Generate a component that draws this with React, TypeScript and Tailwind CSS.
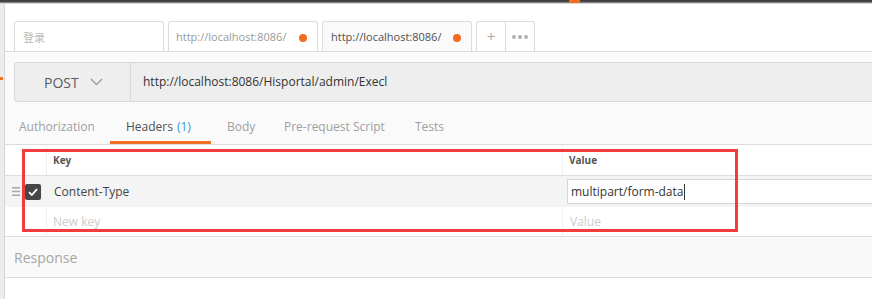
export default function App() {
  return (
    <div className="relative w-[872px] h-[299px] overflow-hidden bg-white font-['Open_Sans',sans-serif]">
      {/* top dark line */}
      <div className="relative h-[4px] bg-[linear-gradient(#3c3c3c_0px,#4a4a4a_2px,#bdbdbd_3px,#f2f2f2_4px)]">
        <div className="absolute left-[569px] top-0 h-[3px] w-[11px] bg-[#f26b21]" />
      </div>
      <div className="flex h-[295px]">
        {/* left strip */}
        <div className="relative w-[5px] shrink-0 bg-[#ececec] border-r border-[#d6d6d6]">
          <div className="absolute left-0 top-[73px] h-[3px] w-[3px] bg-[#f47023]" />
        </div>
        <div className="flex min-w-0 flex-1 flex-col">
          {/* tab bar */}
          <div className="flex h-[48px] shrink-0 items-end gap-[4px] border-b border-[#dcdcdc] bg-white pl-[9px]">
            <div className="flex h-[30px] w-[150px] items-center rounded-t-[3px] border border-b-0 border-[#dcdcdc] bg-white pl-[8px] pt-[2px]">
              <span className="text-[11px] text-[#bbbbbb] font-['Noto_Sans_CJK_SC',sans-serif]">登录</span>
            </div>
            <div className="flex h-[30px] w-[150px] items-center justify-between rounded-t-[3px] border border-b-0 border-[#dcdcdc] bg-white pl-[7px] pr-[10px] pt-[2px]">
              <span className="text-[11px] text-[#9a9a9a]">http://localhost:8086/</span>
              <span className="h-[8px] w-[8px] rounded-full bg-[#f26b21]" />
            </div>
            <div className="flex h-[30px] w-[150px] items-center justify-between rounded-t-[3px] border border-b-0 border-[#dcdcdc] bg-[#fafafa] pl-[8px] pr-[10px] pt-[2px]">
              <span className="text-[11px] text-[#505050]">http://localhost:8086/</span>
              <span className="h-[8px] w-[8px] rounded-full bg-[#f26b21]" />
            </div>
            <div className="flex h-[30px] rounded-t-[3px] border border-b-0 border-[#dcdcdc] bg-white">
              <div className="flex w-[29px] items-center justify-center border-r border-[#dcdcdc] text-[15px] leading-none text-[#aaaaaa]">+</div>
              <div className="flex w-[28px] items-center justify-center gap-[2px]">
                <span className="h-[4px] w-[4px] rounded-full bg-[#b0b0b0]" />
                <span className="h-[4px] w-[4px] rounded-full bg-[#b0b0b0]" />
                <span className="h-[4px] w-[4px] rounded-full bg-[#b0b0b0]" />
              </div>
            </div>
          </div>

          {/* request area */}
          <div className="flex flex-col bg-[#fafafa] pl-[9px]">
            <div className="mt-[10px] mr-[-10px] flex h-[40px] rounded-[3px] border border-[#d8d8d8] bg-[#eeeeee]">
              <div className="flex w-[116px] items-center border-r border-[#d8d8d8] pl-[29px]">
                <span className="text-[14px] font-medium text-[#5c5c5c]">POST</span>
                <svg className="ml-[11px]" width="13" height="8" viewBox="0 0 13 8">
                  <polyline points="1,1 6.5,6.5 12,1" fill="none" stroke="#a0a0a0" strokeWidth="1.5" />
                </svg>
              </div>
              <div className="flex items-center pl-[12px] text-[12px] text-[#333333]">
                http://localhost:8086/Hisportal/admin/Execl
              </div>
            </div>
          </div>

          {/* sub tabs */}
          <div className="flex h-[43px] shrink-0 border-b border-[#dcdcdc] bg-[#fafafa] text-[12px] text-[#a0a0a0]">
            <div className="flex w-[105px] items-center border-b-[3px] border-transparent pl-[14px] pt-[10px]">Authorization</div>
            <div className="flex w-[101px] items-center border-b-[3px] border-[#f07025] pl-[16px] pt-[10px] text-[#505050]">
              Headers <span className="ml-[4px] text-[#3d97de]">(1)</span>
            </div>
            <div className="flex w-[57px] items-center border-b-[3px] border-transparent pl-[16px] pt-[10px]">Body</div>
            <div className="flex w-[131px] items-center border-b-[3px] border-transparent pl-[16px] pt-[10px]">Pre-request Script</div>
            <div className="flex w-[60px] items-center border-b-[3px] border-transparent pl-[16px] pt-[10px]">Tests</div>
          </div>

          {/* headers table */}
          <div className="flex flex-col bg-white">
            <div className="flex h-[31px] border-b border-[#dedede]">
              <div className="w-[42px] shrink-0 border-r border-[#f0f0f0]" />
              <div className="flex w-[515px] shrink-0 items-center pl-[6px] text-[10px] font-bold text-[#555555]">Key</div>
              <div className="flex flex-1 items-center border-l border-[#f0f0f0] pl-[6px] text-[10px] font-bold text-[#555555]">Value</div>
            </div>
            <div className="flex h-[31px] bg-[#f4f4f4]">
              <div className="flex w-[42px] shrink-0 items-center pl-[7px]">
                <svg width="8" height="9" viewBox="0 0 8 9">
                  <rect x="0" y="0" width="8" height="1.5" fill="#a8a8a8" />
                  <rect x="0" y="3.7" width="8" height="1.5" fill="#a8a8a8" />
                  <rect x="0" y="7.5" width="8" height="1.5" fill="#a8a8a8" />
                </svg>
                <div className="ml-[5px] flex h-[16px] w-[16px] items-center justify-center rounded-[2px] bg-[#474747]">
                  <svg width="10" height="8" viewBox="0 0 10 8">
                    <polyline points="1,4.2 3.8,7 9,1.2" fill="none" stroke="#ffffff" strokeWidth="1.8" />
                  </svg>
                </div>
              </div>
              <div className="flex w-[515px] shrink-0 items-center pl-[7px] text-[12px] text-[#444444]">Content-Type</div>
              <div className="flex flex-1 items-start pl-[5px] pt-[3px]">
                <div className="flex h-[25px] w-[320px] shrink-0 items-center border border-[#d6d6d6] bg-white pl-[3px] text-[12px] text-[#333333]">
                  multipart/form-data
                  <span className="ml-[1px] h-[16px] w-[1px] bg-[#333333]" />
                </div>
              </div>
            </div>
            <div className="flex h-[30px] border-b border-[#dedede]">
              <div className="w-[42px] shrink-0 border-r border-[#f0f0f0]" />
              <div className="flex w-[515px] shrink-0 items-center pl-[6px] text-[12px] text-[#cccccc]">New key</div>
              <div className="flex flex-1 items-center border-l border-[#f0f0f0] pl-[7px] text-[12px] text-[#cccccc]">Value</div>
            </div>
          </div>

          {/* response */}
          <div className="flex h-[41px] shrink-0 items-center border-b border-[#dcdcdc] bg-[#f9f9f9] pl-[9px] text-[14px] text-[#a5a5a5]">
            Response
          </div>
          <div className="flex-1 bg-white" />
        </div>
      </div>

      {/* red annotation box */}
      <div className="pointer-events-none absolute left-[22px] top-[149px] h-[83px] w-[716px] border-[3px] border-[#f23b3b]" />
    </div>
  );
}
